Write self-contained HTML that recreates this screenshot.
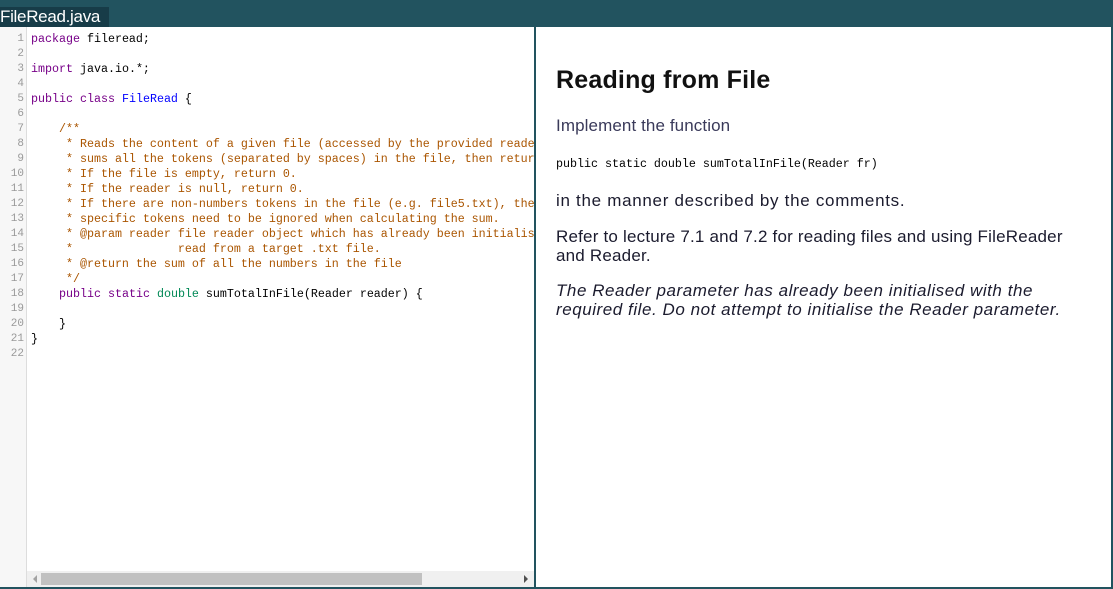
<!DOCTYPE html>
<html><head><meta charset="utf-8"><style>
*{margin:0;padding:0;box-sizing:border-box}
body{width:1113px;height:589px;overflow:hidden;background:#fff;position:relative;font-family:"Liberation Sans",sans-serif}
#top{position:absolute;left:0;top:0;width:1113px;height:27px;background:#22535f}
#tab{position:absolute;left:0;top:7px;width:109px;height:20px;background:#173c48;color:#fff;font-size:17px;line-height:20px;letter-spacing:-0.3px}
#frame{position:absolute;left:0;top:27px;width:1113px;height:562px;border-bottom:2px solid #22535f;border-right:2px solid #22535f}
#gut{position:absolute;left:0;top:27px;width:27px;height:560px;background:#f7f7f7;border-right:1px solid #ddd}
#split{position:absolute;left:534px;top:27px;width:2px;height:562px;background:#22535f}
.code{position:absolute;left:0;top:32px;font-family:"Liberation Mono",monospace;font-size:11.67px;line-height:15px;white-space:pre}
.ln{position:absolute;left:0;top:32px;width:24px;text-align:right;color:#999;font-family:"Liberation Mono",monospace;font-size:11px;line-height:15px}
#codewrap{position:absolute;left:31px;top:32px;width:503px;height:540px;overflow:hidden}
.k{color:#770088}.c{color:#aa5500}.d{color:#008855}.v{color:#0000ff}
#sb{position:absolute;left:27px;top:571px;width:507px;height:16px;background:#f0f0f0}
#thumb{position:absolute;left:41px;top:573px;width:381px;height:12px;background:#c1c1c1}
.r{position:absolute;left:556px;white-space:nowrap;color:#1b1b2e;font-size:17px}
</style></head><body>
<div id="top"><div id="tab">FileRead.java</div></div>
<div id="frame"></div>
<div id="gut"></div>
<div class="ln">1<br>2<br>3<br>4<br>5<br>6<br>7<br>8<br>9<br>10<br>11<br>12<br>13<br>14<br>15<br>16<br>17<br>18<br>19<br>20<br>21<br>22</div>
<div id="codewrap"><div class="code" style="top:0;left:0"><span class="k">package</span> fileread;

<span class="k">import</span> java.io.*;

<span class="k">public</span> <span class="k">class</span> <span class="v">FileRead</span> {

    <span class="c">/**</span>
<span class="c">     * Reads the content of a given file (accessed by the provided reader) and</span>
<span class="c">     * sums all the tokens (separated by spaces) in the file, then return the sum.</span>
<span class="c">     * If the file is empty, return 0.</span>
<span class="c">     * If the reader is null, return 0.</span>
<span class="c">     * If there are non-numbers tokens in the file (e.g. file5.txt), these</span>
<span class="c">     * specific tokens need to be ignored when calculating the sum.</span>
<span class="c">     * @param reader file reader object which has already been initialised to</span>
<span class="c">     *               read from a target .txt file.</span>
<span class="c">     * @return the sum of all the numbers in the file</span>
<span class="c">     */</span>
    <span class="k">public</span> <span class="k">static</span> <span class="d">double</span> sumTotalInFile(Reader reader) {

    }
}
</div></div>
<div id="split"></div>
<div id="sb"></div>
<div id="thumb"></div>
<div style="position:absolute;left:33px;top:575px;width:0;height:0;border-top:4px solid transparent;border-bottom:4px solid transparent;border-right:4px solid #a3a3a3"></div>
<div style="position:absolute;left:524px;top:575px;width:0;height:0;border-top:4px solid transparent;border-bottom:4px solid transparent;border-left:4px solid #505050"></div>

<div class="r" style="top:66px;font-size:25px;font-weight:bold;color:#111;letter-spacing:0.2px">Reading from File</div>
<div class="r" style="top:116px;color:#3a3a5a;letter-spacing:0.1px">Implement the function</div>
<div class="r" style="top:157px;font-family:'Liberation Mono',monospace;font-size:11.67px;color:#000">public static double sumTotalInFile(Reader fr)</div>
<div class="r" style="top:191px;letter-spacing:0.7px">in the manner described by the comments.</div>
<div class="r" style="top:227px;letter-spacing:0.2px">Refer to lecture 7.1 and 7.2 for reading files and using FileReader</div>
<div class="r" style="top:246px;letter-spacing:0.2px">and Reader.</div>
<div class="r" style="top:281px;font-style:italic;letter-spacing:0.55px">The Reader parameter has already been initialised with the</div>
<div class="r" style="top:300px;font-style:italic;letter-spacing:0.55px">required file. Do not attempt to initialise the Reader parameter.</div>
</body></html>
